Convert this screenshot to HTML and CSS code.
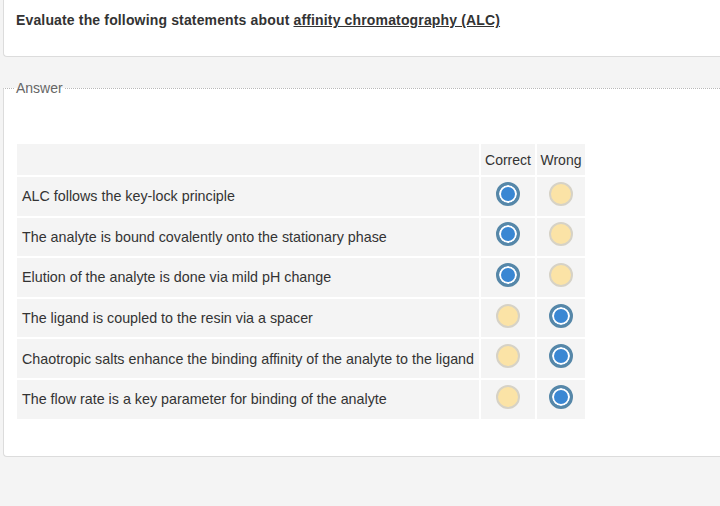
FILE: index.html
```html
<!DOCTYPE html>
<html>
<head>
<meta charset="utf-8">
<link rel="stylesheet" href="styles.css">
</head>
<body>
<div class="page">
  <div class="question">
    <p class="qtext">Evaluate the following statements about <span class="term">affinity chromatography (ALC)</span></p>
  </div>
  <fieldset class="answer">
    <legend>Answer</legend>
    <table class="grid">
      <thead>
        <tr><th class="stmt"></th><th class="opt c1">Correct</th><th class="opt c2">Wrong</th></tr>
      </thead>
      <tbody>
        <tr><td class="stmt">ALC follows the key-lock principle</td><td class="opt"><span class="radio on"></span></td><td class="opt"><span class="radio"></span></td></tr>
        <tr><td class="stmt">The analyte is bound covalently onto the stationary phase</td><td class="opt"><span class="radio on"></span></td><td class="opt"><span class="radio"></span></td></tr>
        <tr><td class="stmt">Elution of the analyte is done via mild pH change</td><td class="opt"><span class="radio on"></span></td><td class="opt"><span class="radio"></span></td></tr>
        <tr><td class="stmt">The ligand is coupled to the resin via a spacer</td><td class="opt"><span class="radio"></span></td><td class="opt"><span class="radio on"></span></td></tr>
        <tr><td class="stmt">Chaotropic salts enhance the binding affinity of the analyte to the ligand</td><td class="opt"><span class="radio"></span></td><td class="opt"><span class="radio on"></span></td></tr>
        <tr><td class="stmt">The flow rate is a key parameter for binding of the analyte</td><td class="opt"><span class="radio"></span></td><td class="opt"><span class="radio on"></span></td></tr>
      </tbody>
    </table>
  </fieldset>
</div>
</body>
</html>
```
FILE: styles.css
```css
html, body {
  margin: 0;
  padding: 0;
  background: #f4f4f4;
  width: 720px;
  height: 506px;
  overflow: hidden;
}
.page {
  font-family: "Liberation Sans", Arial, sans-serif;
  color: #333;
  width: 720px;
  box-sizing: border-box;
  padding-left: 3px;
}
.question {
  background: #fff;
  border: 1px solid #dcdcdc;
  border-top: none;
  border-right: none;
  border-radius: 0 0 0 4px;
  height: 57px;
  box-sizing: border-box;
  padding: 12px 0 0 12px;
}
.qtext {
  margin: 0;
  font-size: 14px;
  font-weight: bold;
  line-height: 17px;
  letter-spacing: 0.15px;
}
.term {
  text-decoration: underline;
}
.answer {
  margin: 24px 0 0 0;
  background: #fff;
  border: 1px solid #dcdcdc;
  border-top: 1px dotted #b8b8b8;
  border-right: none;
  border-radius: 0 0 0 4px;
  padding: 47px 0 38px 11px;
  min-width: 0;
  height: 376px;
  box-sizing: border-box;
}
.answer legend {
  font-size: 14px;
  color: #666;
  padding: 0 1px;
  margin-left: 0;
  line-height: 14px;
}
.grid {
  border-collapse: separate;
  border-spacing: 2px;
  font-size: 14.3px;
  color: #333;
}
.grid th, .grid td {
  background: #f4f4f4;
  padding: 0;
}
.grid th {
  height: 31px;
  font-weight: normal;
  font-size: 14px;
  color: #333;
}
.grid td {
  height: 38.6px;
}
.grid td.stmt {
  width: 457px;
  padding-left: 5px;
  padding-right: 0;
}
.grid th.stmt { width: 462px; }
.c1 { width: 54px; }
.c2 { width: 48px; }
.opt {
  text-align: center;
  vertical-align: middle;
}
.radio {
  display: inline-block;
  width: 24px;
  height: 24px;
  box-sizing: border-box;
  border-radius: 50%;
  background: #fbe3a6;
  border: 2px solid #d6d2c6;
  vertical-align: middle;
  margin-bottom: 5px;
}
.radio.on {
  background: #3a87d3;
  border: 3px solid #5687a8;
  box-shadow: inset 0 0 0 2px #ffffff;
}
```
